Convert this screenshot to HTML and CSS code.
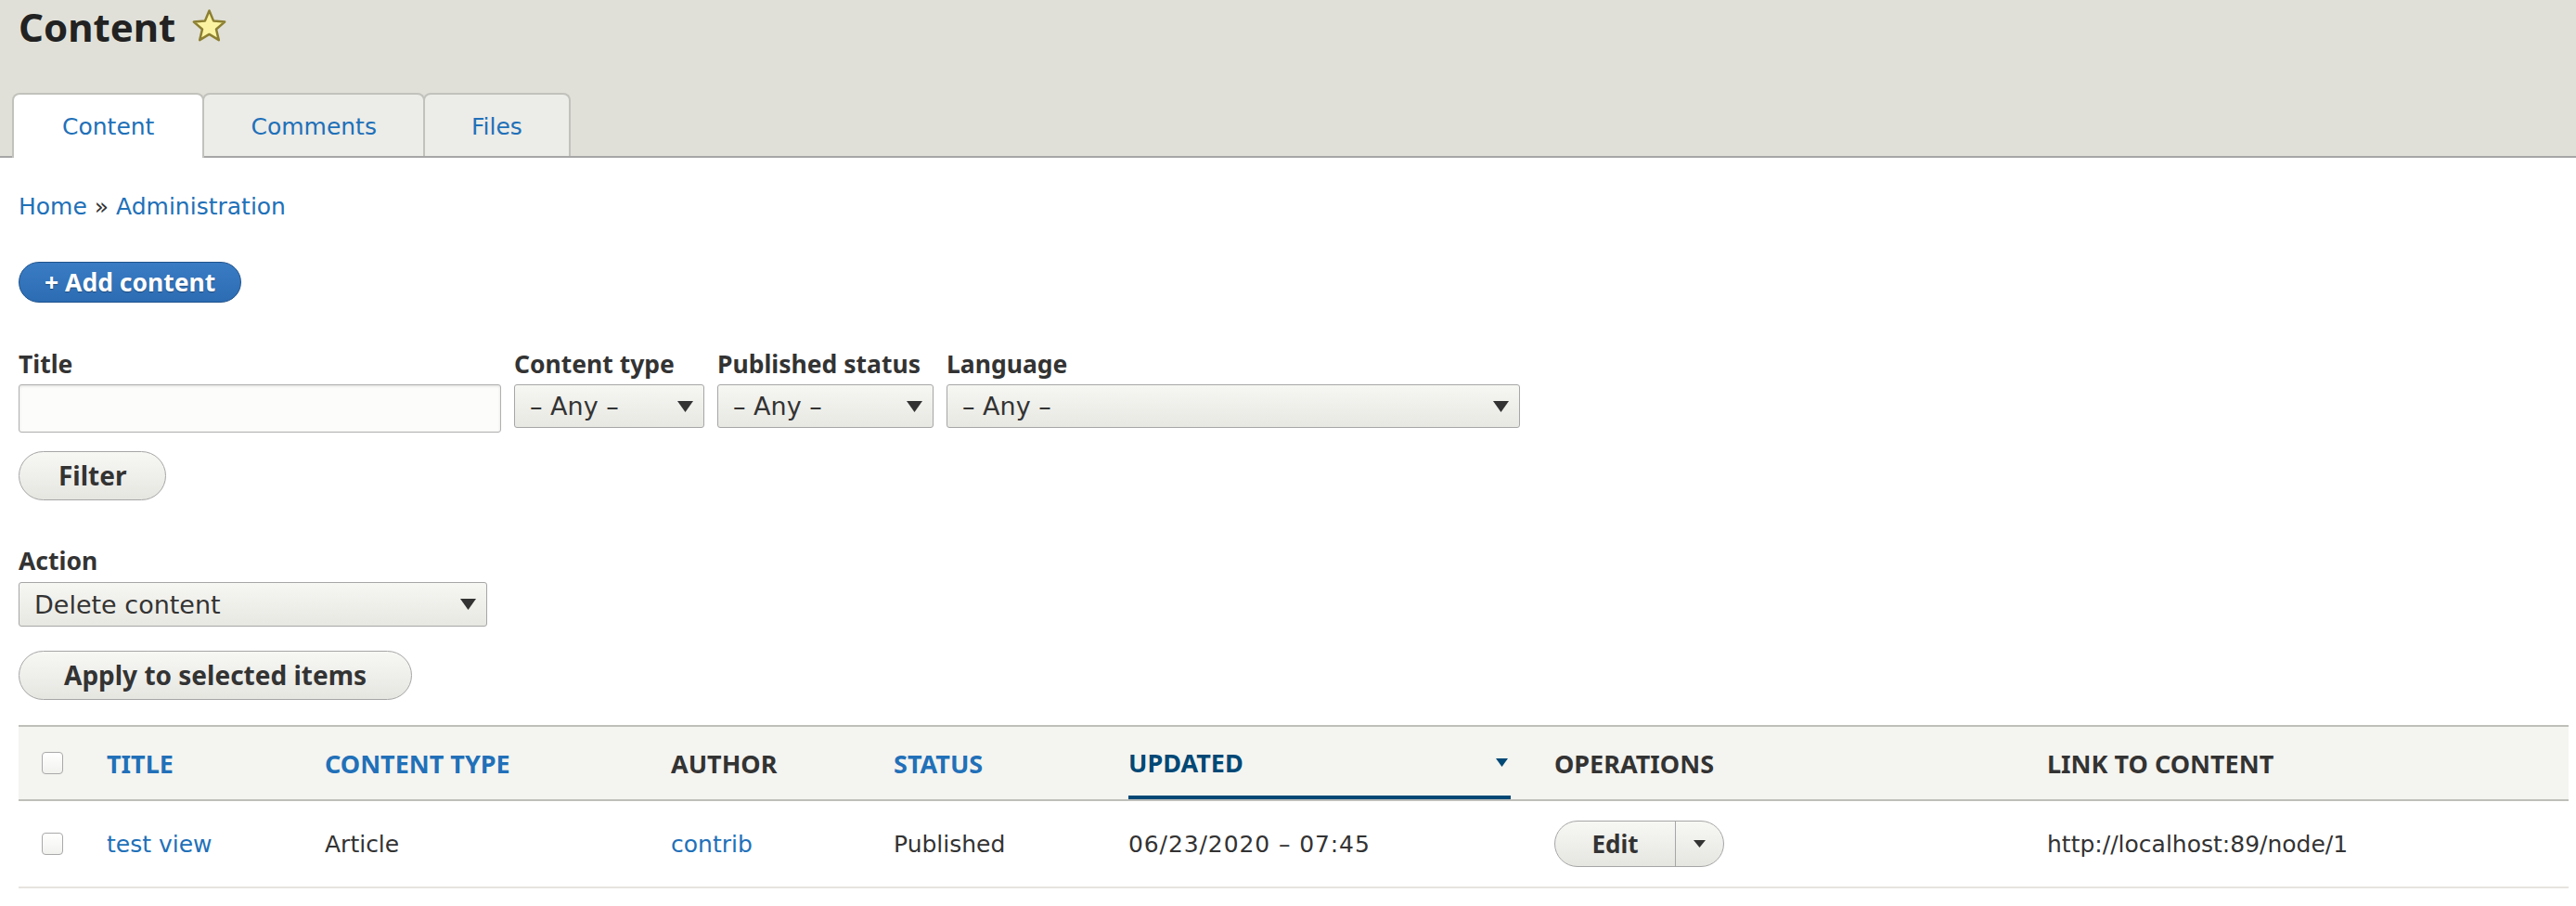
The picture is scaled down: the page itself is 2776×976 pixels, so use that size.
FILE: index.html
```html
<!DOCTYPE html>
<html lang="en">
<head>
    <meta charset="UTF-8">
    <title>Content</title>
    <link rel="stylesheet" href="styles.css">
</head>
<body>
    <header class="page-header">
        <h1 class="page-title">Content
            <svg class="star" width="37" height="35" viewBox="0 0 37 35">
                <polygon points="18.5,1.5 23.14,12.61 35.14,13.59 26.01,21.44 28.79,33.16 18.5,26.9 8.21,33.16 10.99,21.44 1.86,13.59 13.86,12.61" fill="#fbf3a2" stroke="#8c7f32" stroke-width="2.5" stroke-linejoin="round"/>
            </svg>
        </h1>
        <ul class="tabs">
            <li class="tab is-active"><a href="#">Content</a></li>
            <li class="tab"><a href="#">Comments</a></li>
            <li class="tab"><a href="#">Files</a></li>
        </ul>
    </header>

    <main class="page-content">
        <nav class="breadcrumb"><a href="#">Home</a> » <a href="#">Administration</a></nav>

        <div class="action-links">
            <a class="button button--primary" href="#">+ Add content</a>
        </div>

        <form class="filters">
            <div class="filter-row">
                <div class="form-item form-item--title">
                    <label for="title">Title</label>
                    <input class="form-text" type="text" id="title">
                </div>
                <div class="form-item form-item--type">
                    <label for="type">Content type</label>
                    <div class="select">
                        <select id="type"><option>– Any –</option></select>
                        <svg class="select-arrow" width="17" height="12" viewBox="0 0 17 12"><polygon points="0,0 17,0 8.5,12" fill="#333"/></svg>
                    </div>
                </div>
                <div class="form-item form-item--status">
                    <label for="status">Published status</label>
                    <div class="select">
                        <select id="status"><option>– Any –</option></select>
                        <svg class="select-arrow" width="17" height="12" viewBox="0 0 17 12"><polygon points="0,0 17,0 8.5,12" fill="#333"/></svg>
                    </div>
                </div>
                <div class="form-item form-item--lang">
                    <label for="lang">Language</label>
                    <div class="select">
                        <select id="lang"><option>– Any –</option></select>
                        <svg class="select-arrow" width="17" height="12" viewBox="0 0 17 12"><polygon points="0,0 17,0 8.5,12" fill="#333"/></svg>
                    </div>
                </div>
            </div>
            <div class="form-actions">
                <button type="button" class="button button--filter">Filter</button>
            </div>
        </form>

        <div class="bulk-form">
            <label for="action">Action</label>
            <div class="select select--action">
                <select id="action"><option>Delete content</option></select>
                <svg class="select-arrow" width="17" height="12" viewBox="0 0 17 12"><polygon points="0,0 17,0 8.5,12" fill="#333"/></svg>
            </div>
            <div class="form-actions form-actions--bulk">
                <button type="button" class="button button--apply">Apply to selected items</button>
            </div>
        </div>

        <table class="content-table">
            <colgroup>
                <col style="width: 83px">
                <col style="width: 235px">
                <col style="width: 373px">
                <col style="width: 240px">
                <col style="width: 253px">
                <col style="width: 459px">
                <col style="width: 531px">
                <col>
            </colgroup>
            <thead>
                <tr>
                    <th class="select-all"><div class="cell"><input type="checkbox" class="checkbox"></div></th>
                    <th><div class="cell"><a href="#">Title</a></div></th>
                    <th><div class="cell"><a href="#">Content type</a></div></th>
                    <th><div class="cell">Author</div></th>
                    <th><div class="cell"><a href="#">Status</a></div></th>
                    <th class="is-sorted">
                        <a class="sort-link" href="#">Updated
                            <svg width="13" height="9" viewBox="0 0 13 9"><polygon points="0,0 13,0 6.5,9" fill="#004875"/></svg>
                        </a>
                    </th>
                    <th><div class="cell">Operations</div></th>
                    <th><div class="cell">Link to content</div></th>
                </tr>
            </thead>
            <tbody>
                <tr>
                    <td class="select-all"><div class="cell"><input type="checkbox" class="checkbox"></div></td>
                    <td><div class="cell"><a href="#">test view</a></div></td>
                    <td><div class="cell">Article</div></td>
                    <td><div class="cell"><a href="#">contrib</a></div></td>
                    <td><div class="cell">Published</div></td>
                    <td><div class="cell date">06/23/2020 – 07:45</div></td>
                    <td>
                        <div class="cell">
                            <div class="dropbutton">
                                <a class="dropbutton-action" href="#">Edit</a>
                                <span class="dropbutton-toggle">
                                    <svg width="13" height="8" viewBox="0 0 13 8"><polygon points="0,0 13,0 6.5,8" fill="#333"/></svg>
                                </span>
                            </div>
                        </div>
                    </td>
                    <td><div class="cell">http://localhost:89/node/1</div></td>
                </tr>
            </tbody>
        </table>
    </main>
</body>
</html>
```

FILE: styles.css
```css
body {
    margin: 0;
    font-family: "DejaVu Sans", sans-serif;
    font-size: 25px;
    color: #333;
    background: #fff;
}

a {
    color: #2170b8;
    text-decoration: none;
}

/* header + tabs */
.page-header {
    background: #e0e0d8;
    border-bottom: 2px solid #a6a6a6;
    padding-top: 10px;
}

.page-title {
    display: flex;
    align-items: flex-start;
    margin: 0 0 0 20px;
    font-family: "Noto Sans", sans-serif;
    font-weight: 700;
    font-size: 42px;
    line-height: 37px;
    color: #222;
}

.star {
    margin-left: 18px;
}

.tabs {
    display: flex;
    align-items: flex-start;
    list-style: none;
    margin: 53px 0 -2px 13px;
    padding: 0;
}

.tab + .tab {
    margin-left: -2px;
}

.tab a {
    display: block;
    padding: 4px 50px 0;
    line-height: 62px;
    border: 2px solid #c2c2bd;
    border-bottom: 0;
    border-radius: 8px 8px 0 0;
    background: #ecece8;
}

.tab.is-active a {
    padding: 4px 52px 2px;
    background: #fff;
}

/* page body */
.page-content {
    padding: 0 8px 0 20px;
}

.breadcrumb {
    margin-top: 34px;
    line-height: 37px;
}

.action-links {
    display: flex;
    margin-top: 41px;
}

.button {
    display: block;
    box-sizing: border-box;
    font-family: "Noto Sans", sans-serif;
    font-weight: 700;
    color: #333;
    border: 1px solid #a6a6a6;
    background: linear-gradient(#f7f7f4, #e6e6e1);
    cursor: pointer;
}

.button--primary {
    height: 44px;
    padding: 0 27px;
    font-size: 26.5px;
    line-height: 42px;
    color: #fff;
    border-color: #1e528c;
    border-radius: 22px;
    background: linear-gradient(#3a7cc4, #2c6cb3);
    text-shadow: 0 1px 1px rgba(0, 0, 0, 0.35);
}

.filters {
    margin-top: 49px;
}

.filter-row {
    display: flex;
    align-items: flex-start;
    gap: 14px;
}

label {
    display: block;
    font-family: "Noto Sans", sans-serif;
    font-weight: 700;
    font-size: 26.5px;
    line-height: 34px;
    color: #333;
    margin-bottom: 5px;
}

.form-item--title { width: 520px; }
.form-item--type { width: 205px; }
.form-item--status { width: 233px; }
.form-item--lang { width: 618px; }

.form-text {
    display: block;
    width: 100%;
    height: 52px;
    box-sizing: border-box;
    border: 1px solid #b0b0b0;
    border-radius: 3px;
    background: #fcfcfa;
    box-shadow: inset 0 1px 3px rgba(0, 0, 0, 0.12);
}

.select {
    position: relative;
}

.select select {
    display: block;
    width: 100%;
    height: 47px;
    box-sizing: border-box;
    padding: 0 40px 0 16px;
    appearance: none;
    -webkit-appearance: none;
    font-family: "DejaVu Sans", sans-serif;
    font-size: 27px;
    color: #333;
    border: 1px solid #a6a6a6;
    border-radius: 3px;
    background: linear-gradient(#f6f6f2, #e8e8e3);
}

.select-arrow {
    position: absolute;
    right: 12px;
    top: 50%;
    margin-top: -6px;
}

.form-actions {
    display: flex;
    margin-top: 20px;
}

.button--filter,
.button--apply {
    height: 53px;
    font-size: 28px;
    line-height: 51px;
    border-radius: 27px;
}

.button--filter {
    padding: 0 42px;
}

.button--apply {
    padding: 0 48px;
}

.bulk-form {
    margin-top: 48px;
}

.bulk-form label {
    margin-bottom: 6px;
}

.select--action {
    width: 505px;
}

.select--action select {
    height: 48px;
}

.form-actions--bulk {
    margin-top: 26px;
}

/* table */
.content-table {
    width: 100%;
    margin-top: 27px;
    table-layout: fixed;
    border-collapse: separate;
    border-spacing: 0;
}

.content-table th,
.content-table td {
    padding: 0 0 0 12px;
    text-align: left;
    vertical-align: middle;
}

.content-table th {
    background: #f4f4f0;
    border-top: 2px solid #bfbfba;
    border-bottom: 2px solid #bfbfba;
    font-family: "Noto Sans", sans-serif;
    font-weight: 700;
    font-size: 27px;
    text-transform: uppercase;
    color: #333;
}

.content-table td {
    border-bottom: 2px solid #e6e4df;
}

.content-table .select-all {
    padding-left: 25px;
}

.cell {
    display: flex;
    align-items: center;
}

th .cell {
    height: 78px;
}

td .cell {
    height: 92px;
}

.date {
    letter-spacing: 0.9px;
}

.content-table th.is-sorted {
    padding-right: 35px;
}

.sort-link {
    display: flex;
    align-items: center;
    justify-content: space-between;
    height: 78px;
    box-sizing: border-box;
    padding: 2px 3px 0 0;
    border-bottom: 4px solid #004875;
    color: #004875;
}

.checkbox {
    appearance: none;
    -webkit-appearance: none;
    display: block;
    width: 23px;
    height: 24px;
    margin: 0;
    border: 1px solid #a9a9a9;
    border-radius: 4px;
    background: linear-gradient(#fff, #f1f1ee);
}

.dropbutton {
    display: flex;
    width: 183px;
    height: 50px;
    box-sizing: border-box;
    border: 1px solid #a6a6a6;
    border-radius: 25px;
    background: linear-gradient(#f7f7f4, #e6e6e1);
    overflow: hidden;
}

.dropbutton-action {
    display: flex;
    align-items: center;
    justify-content: center;
    flex: 0 0 129px;
    font-family: "Noto Sans", sans-serif;
    font-weight: 700;
    font-size: 26px;
    color: #333;
}

.dropbutton-toggle {
    display: flex;
    align-items: center;
    justify-content: center;
    flex: 1;
    border-left: 1px solid #a6a6a6;
}
```
